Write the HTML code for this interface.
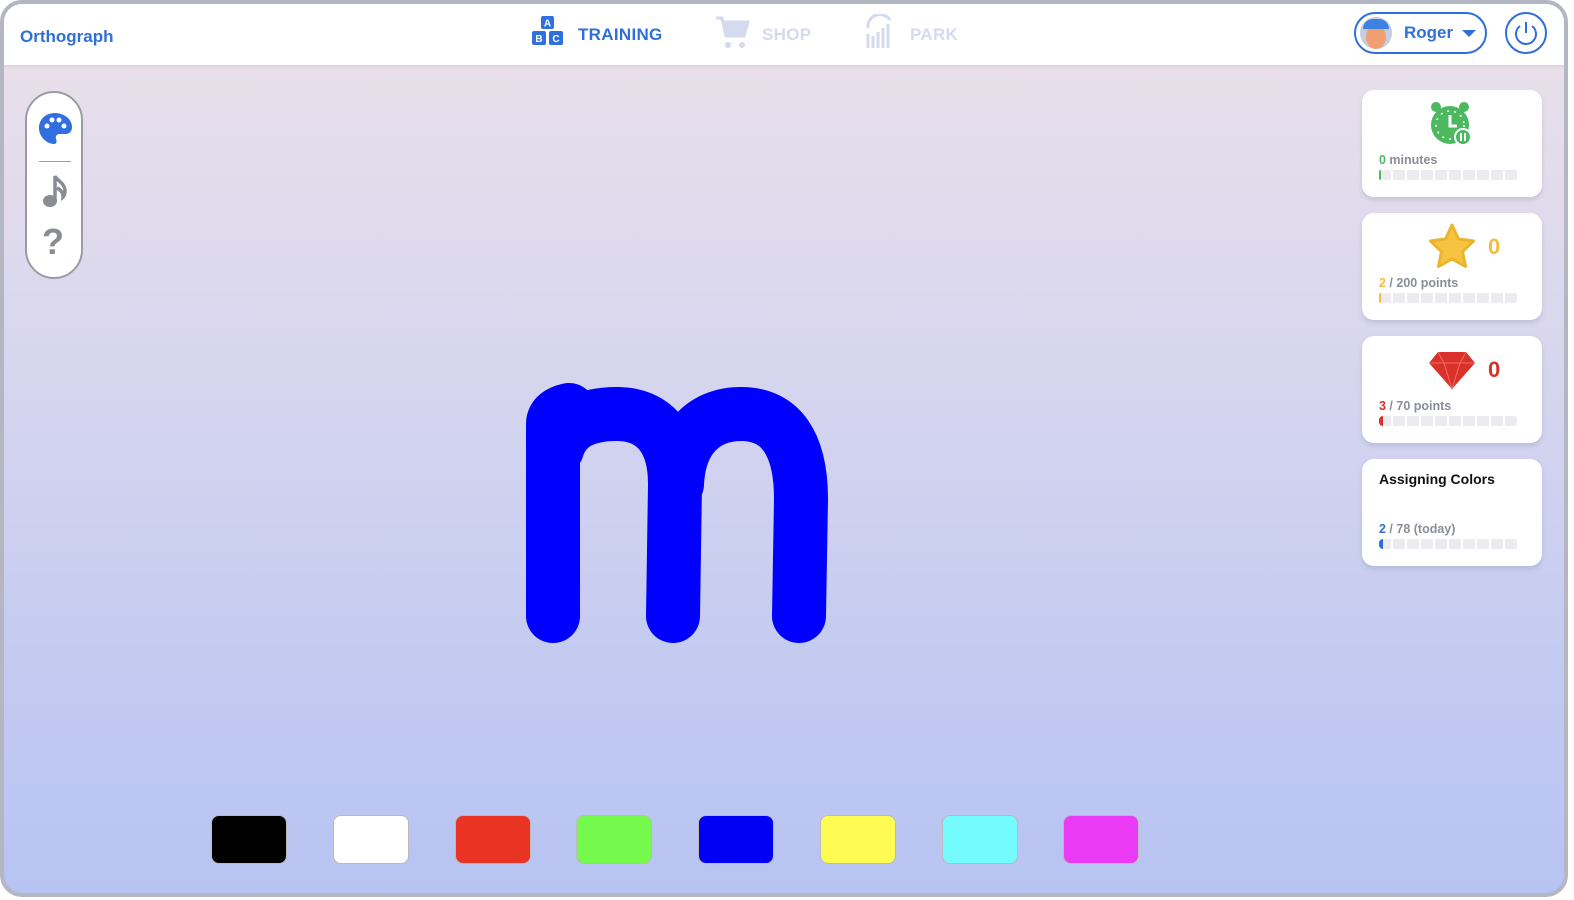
<!DOCTYPE html>
<html><head><meta charset="utf-8"><style>
*{margin:0;padding:0;box-sizing:border-box}
body{width:1574px;height:900px;background:#fff;overflow:hidden;font-family:"Liberation Sans",sans-serif}
#frame{position:absolute;left:0;top:0;width:1568px;height:897px;border:4px solid #b4b6c2;border-radius:22px;overflow:hidden;background:linear-gradient(#e8dfea 60px,#d8d6ee 350px,#c4cbf1 650px,#b7c3f2)}
#top{position:absolute;left:0;top:0;right:0;height:61px;background:#fff;box-shadow:0 1px 3px rgba(0,0,0,.08)}
.logo{position:absolute;left:16px;top:23px;color:#2f6fd8;font-weight:bold;font-size:17px}
.nav{position:absolute;top:21px;font-weight:bold;font-size:17px;letter-spacing:.3px}
.card{position:absolute;left:1358px;width:180px;height:107px;background:#fff;border-radius:12px;box-shadow:0 3px 4px rgba(120,130,160,.25)}
.lbl{position:absolute;left:17px;font-size:12.5px;font-weight:bold;color:#8a8e98}
.bar{position:absolute;left:17px;width:140px;height:10px;border-radius:5px;background:repeating-linear-gradient(90deg,#ececf0 0 12px,#fff 12px 14px)}
.bar i{position:absolute;left:0;top:0;width:4px;height:10px;border-radius:5px 0 0 5px}
.sw{position:absolute;top:811px;width:76px;height:49px;border-radius:8px;border:1px solid #bbb}
</style></head><body>
<div id="frame">
<div id="top">
 <div class="logo">Orthograph</div>
 <svg style="position:absolute;left:527px;top:10px" width="34" height="34" viewBox="0 0 34 34">
  <rect x="10" y="2" width="13" height="13" rx="2" fill="#2f6fe0"/><rect x="1" y="17" width="14" height="14" rx="2" fill="#2f6fe0"/><rect x="18" y="17" width="14" height="14" rx="2" fill="#2f6fe0"/>
  <text x="16.5" y="12.5" font-size="10" fill="#fff" text-anchor="middle" font-weight="bold" font-family="Liberation Sans">A</text>
  <text x="8" y="28" font-size="10" fill="#fff" text-anchor="middle" font-weight="bold" font-family="Liberation Sans">B</text>
  <text x="25" y="28" font-size="10" fill="#fff" text-anchor="middle" font-weight="bold" font-family="Liberation Sans">C</text>
 </svg>
 <div class="nav" style="left:574px;color:#2f6fd8">TRAINING</div>
 <svg style="position:absolute;left:710px;top:10px" width="36" height="36" viewBox="0 0 36 36"><path d="M2 4h6l4 18h18l4-14H10" fill="#d5daee" stroke="#d5daee" stroke-width="3"/><circle cx="14" cy="31" r="3" fill="#d5daee"/><circle cx="28" cy="31" r="3" fill="#d5daee"/></svg>
 <div class="nav" style="left:758px;color:#d5daee">SHOP</div>
 <svg style="position:absolute;left:860px;top:10px" width="34" height="36" viewBox="0 0 34 36"><path d="M4 34V20M9 34V22M14 34V18M19 34V14M24 34V10M4 14a12 12 0 0 1 22-8" stroke="#d5daee" stroke-width="3" fill="none"/></svg>
 <div class="nav" style="left:906px;color:#d5daee">PARK</div>
 <div style="position:absolute;left:1350px;top:8px;width:133px;height:42px;border:2px solid #2f6fd8;border-radius:21px">
  <div style="position:absolute;left:4px;top:3px;width:32px;height:32px;border-radius:50%;background:#c7cce0;overflow:hidden"><div style="position:absolute;left:6px;top:8px;width:20px;height:24px;border-radius:50%;background:#f0a070"></div><div style="position:absolute;left:3px;top:2px;width:26px;height:10px;border-radius:12px 12px 0 0;background:#3d82e0"></div></div>
  <div style="position:absolute;left:48px;top:9px;font-weight:bold;font-size:17px;color:#2f6fd8">Roger</div>
  <div style="position:absolute;left:106px;top:16px;border-left:7px solid transparent;border-right:7px solid transparent;border-top:7px solid #2f6fd8"></div>
 </div>
 <div style="position:absolute;left:1501px;top:8px;width:42px;height:42px;border:2px solid #2f6fd8;border-radius:50%">
  <svg width="38" height="38" viewBox="0 0 38 38"><path d="M13 12a10 10 0 1 0 12 0" fill="none" stroke="#2f6fd8" stroke-width="2"/><path d="M19 8v11" stroke="#2f6fd8" stroke-width="2"/></svg>
 </div>
</div>

<div style="position:absolute;left:21px;top:87px;width:58px;height:188px;background:#fff;border:2px solid #9a9ca4;border-radius:29px">
 <svg style="position:absolute;left:10px;top:18px" width="36" height="36" viewBox="0 0 36 36"><path d="M18 2C8 2 2 9 2 17c0 9 8 16 15 16 3 0 3-3 2-5-1-3 1-5 4-5h5c5 0 7-3 7-7C35 8 27 2 18 2z" fill="#2f6fe0"/><circle cx="10" cy="15" r="2.5" fill="#fff"/><circle cx="15" cy="9" r="2.5" fill="#fff"/><circle cx="22" cy="9" r="2.5" fill="#fff"/><circle cx="27" cy="15" r="2.5" fill="#fff"/></svg>
 <div style="position:absolute;left:12px;top:68px;width:32px;height:1px;background:#9a9ca4"></div>
 <svg style="position:absolute;left:14px;top:80px" width="30" height="36" viewBox="0 0 30 36"><ellipse cx="9" cy="28" rx="7" ry="6" fill="#8a8c94"/><path d="M14 28V3c2 5 10 7 10 15 0 3-1 5-2 6 0-6-4-8-6-9" fill="none" stroke="#8a8c94" stroke-width="3.5"/></svg>
 <div style="position:absolute;left:15px;top:128px;font-size:36px;font-weight:bold;color:#8a8c94">?</div>
</div>

<svg style="position:absolute;left:0;top:0" width="1574" height="900"><path d="M549 612V420C549 412 556 408 565 406M553 445C560 420 582 410 613 410C650 410 671 435 671 480L669 612M673 480C675 435 700 410 737 410C777 410 797 440 797 495L795 612" fill="none" stroke="#0000ff" stroke-width="54" stroke-linecap="round" stroke-linejoin="round"/></svg>

<div class="card" style="top:86px">
 <svg style="position:absolute;left:64px;top:9px" width="48" height="48" viewBox="0 0 48 48"><circle cx="10" cy="8" r="5" fill="#4cb860"/><circle cx="38" cy="8" r="5" fill="#4cb860"/><circle cx="24" cy="26" r="19" fill="#4cb860"/><circle cx="24" cy="26" r="14" fill="none" stroke="#fff" stroke-width="1.5" stroke-dasharray="2 5"/><path d="M24 16v11h7" stroke="#fff" stroke-width="3" fill="none"/><circle cx="37" cy="38" r="8" fill="#4cb860" stroke="#fff" stroke-width="2"/><path d="M35 34v8M39 34v8" stroke="#fff" stroke-width="2"/></svg>
 <div class="lbl" style="top:63px"><span style="color:#4cb860">0</span> minutes</div>
 <div class="bar" style="top:80px"><i style="background:#4cb860;width:2px"></i></div>
</div>
<div class="card" style="top:209px">
 <svg style="position:absolute;left:64px;top:8px" width="52" height="52" viewBox="0 0 52 52"><path d="M26 4l6.5 14 15 2-11 10.5 3 15-13.5-7.5-13.5 7.5 3-15L4.5 20l15-2z" fill="#f6c343" stroke="#eab52a" stroke-width="3" stroke-linejoin="round"/></svg>
 <div style="position:absolute;left:126px;top:21px;font-size:22px;font-weight:bold;color:#f2bd42">0</div>
 <div class="lbl" style="top:63px"><span style="color:#f2bd42">2</span> / 200 points</div>
 <div class="bar" style="top:80px"><i style="background:#f2bd42;width:2px"></i></div>
</div>
<div class="card" style="top:332px">
 <svg style="position:absolute;left:66px;top:14px" width="48" height="40" viewBox="0 0 48 40"><path d="M10 2h28l9 11-23 26L1 13z" fill="#d9322b"/><path d="M10 2l6 11h16l6-11M1 13h46M16 13l8 26 8-26" fill="none" stroke="#f06a60" stroke-width="1"/></svg>
 <div style="position:absolute;left:126px;top:21px;font-size:22px;font-weight:bold;color:#d9322b">0</div>
 <div class="lbl" style="top:63px"><span style="color:#d9322b">3</span> / 70 points</div>
 <div class="bar" style="top:80px"><i style="background:#d9322b"></i></div>
</div>
<div class="card" style="top:455px">
 <div style="position:absolute;left:17px;top:12px;font-size:14px;font-weight:bold;color:#111">Assigning Colors</div>
 <div class="lbl" style="top:63px"><span style="color:#2f6fd8">2</span> / 78 (today)</div>
 <div class="bar" style="top:80px"><i style="background:#2f6fd8"></i></div>
</div>

<div class="sw" style="left:207px;background:#000"></div>
<div class="sw" style="left:329px;background:#fff"></div>
<div class="sw" style="left:451px;background:#e93323"></div>
<div class="sw" style="left:572px;background:#75f94c"></div>
<div class="sw" style="left:694px;background:#0000f5"></div>
<div class="sw" style="left:816px;background:#fefb53"></div>
<div class="sw" style="left:938px;background:#74fbfd"></div>
<div class="sw" style="left:1059px;background:#ea3af6"></div>
</div>
</body></html>
